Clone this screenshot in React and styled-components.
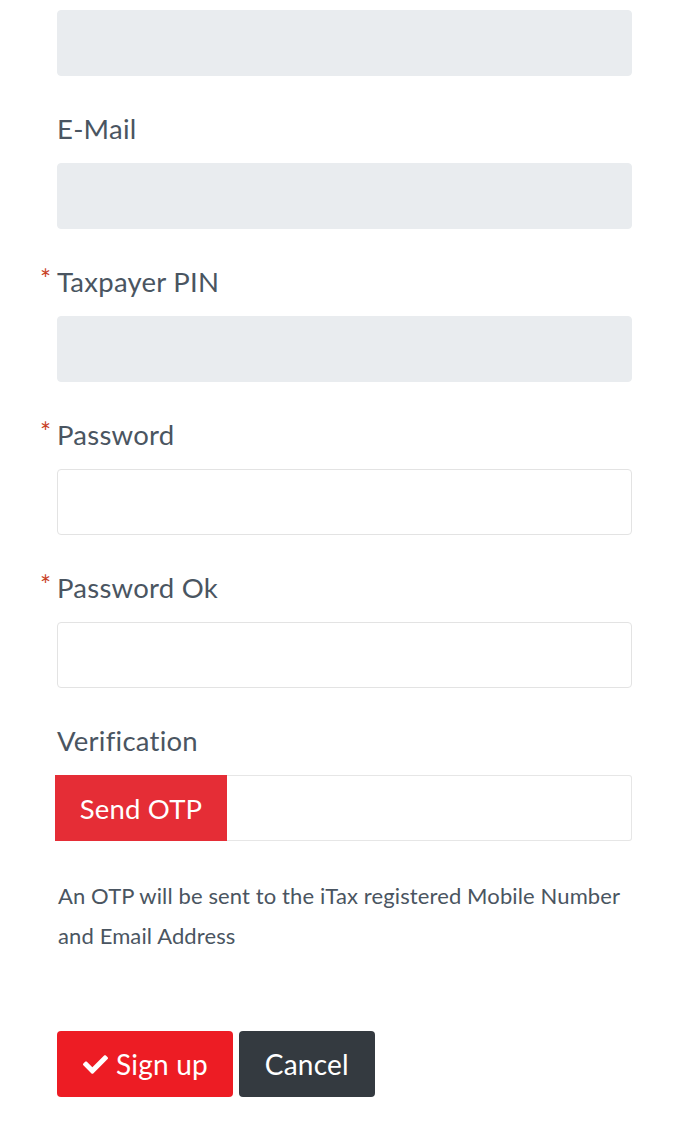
import styled, { createGlobalStyle } from 'styled-components'
import { FaCheck } from 'react-icons/fa'

const GlobalStyle = createGlobalStyle`
  body {
    margin: 0;
    background: #fff;
    font-family: Lato, "Liberation Sans", sans-serif;
    color: #495561;
  }
`

const Form = styled.form`
  padding: 10px 58px 30px 57px;
  display: flex;
  flex-direction: column;
`

const Label = styled.label`
  position: relative;
  display: block;
  font-size: 27.5px;
  letter-spacing: 0.25px;
  line-height: 40px;
  margin: 33px 0 14px;
  color: #4a5561;
`

const Required = styled.span`
  position: absolute;
  left: -17px;
  top: 2px;
  font-size: 26px;
  line-height: 30px;
  color: #c8401f;
`

const Input = styled.input`
  box-sizing: border-box;
  width: 100%;
  height: 66px;
  border-radius: 4px;
  border: 1px solid ${p => (p.disabled ? '#e9ecef' : '#e3e3e3')};
  background: ${p => (p.disabled ? '#e9ecef' : '#fff')};
  font-size: 22px;
  padding: 0 16px;
  outline: none;
`

const InputGroup = styled.div`
  display: flex;
  height: 66px;
  margin-left: -2px;
`

const OtpButton = styled.button`
  width: 172px;
  border: none;
  background: #e52d36;
  color: #fff;
  font-family: inherit;
  font-size: 27.5px;
  letter-spacing: 0.2px;
  padding: 0;
`

const GroupInput = styled.input`
  flex: 1;
  box-sizing: border-box;
  border: 1px solid #e6e6e6;
  border-left: none;
  border-radius: 0 3px 3px 0;
  outline: none;
  font-size: 22px;
`

const Help = styled.p`
  margin: 35px 0 0;
  padding-left: 1px;
  font-size: 22px;
  letter-spacing: 0.12px;
  line-height: 40px;
  color: #4a5561;
`

const Actions = styled.div`
  display: flex;
  gap: 6px;
  margin-top: 75px;
`

const Button = styled.button`
  height: 66px;
  border: none;
  border-radius: 4px;
  padding: ${p => (p.$dark ? '0 26px' : '0 25px 0 26px')};
  display: flex;
  align-items: center;
  gap: 8px;
  font-family: inherit;
  font-size: 28px;
  letter-spacing: 0.2px;
  color: #fff;
  background: ${p => (p.$dark ? '#343a40' : '#ed1c24')};

  svg {
    font-size: 25px;
  }
`

const fields = [
  { label: null, disabled: true },
  { label: 'E-Mail', disabled: true },
  { label: 'Taxpayer PIN', disabled: true, required: true },
  { label: 'Password', required: true, type: 'password' },
  { label: 'Password Ok', required: true, type: 'password' },
]

const App = () => {
  return (
    <>
      <GlobalStyle />
      <Form onSubmit={e => e.preventDefault()}>
        {fields.map((f, i) => (
          <div key={i}>
            {f.label && (
              <Label>
                {f.required && <Required>*</Required>}
                {f.label}
              </Label>
            )}
            <Input disabled={f.disabled} type={f.type || 'text'} />
          </div>
        ))}
        <Label>Verification</Label>
        <InputGroup>
          <OtpButton type="button">Send OTP</OtpButton>
          <GroupInput />
        </InputGroup>
        <Help>
          An OTP will be sent to the iTax registered Mobile Number
          <br />
          and Email Address
        </Help>
        <Actions>
          <Button type="submit">
            <FaCheck />
            Sign up
          </Button>
          <Button type="button" $dark>Cancel</Button>
        </Actions>
      </Form>
    </>
  )
}

export default App
